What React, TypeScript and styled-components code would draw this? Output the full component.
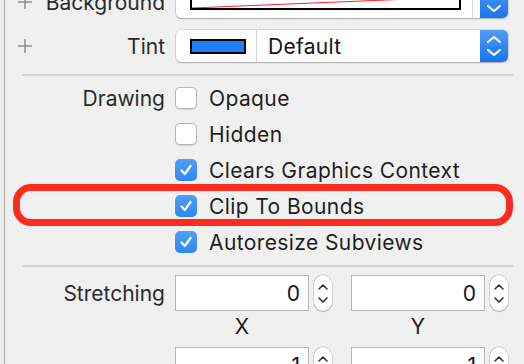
import React from 'react';
import styled, { createGlobalStyle } from 'styled-components';

const GlobalStyle = createGlobalStyle`
  html, body {
    margin: 0;
    padding: 0;
    background: #ececec;
  }
  body {
    width: 524px;
    height: 364px;
    overflow: hidden;
    font-family: Inter, "Noto Sans", sans-serif;
    -webkit-font-smoothing: antialiased;
  }
`;

const Panel = styled.div`
  margin-left: 4px;
  height: 364px;
  border-left: 1px solid #a9a9a9;
  background: #f0f0f0;
  display: flex;
  flex-direction: column;
  overflow: hidden;
`;

const TopGroup = styled.div`
  margin-top: -14px;
  display: flex;
  flex-direction: column;
  gap: 12px;
`;

const Row = styled.div<{ $h: number }>`
  position: relative;
  display: grid;
  grid-template-columns: 160px 333px;
  column-gap: 10px;
  align-items: center;
  height: ${p => p.$h}px;
  flex-shrink: 0;
`;

const LabelCell = styled.div`
  display: flex;
  align-items: center;
  justify-content: flex-end;
  padding-left: 13px;
  font-size: 21px;
  color: #2b2b2b;
  white-space: nowrap;
`;

const PlusIcon = styled.svg`
  margin-right: auto;
  flex-shrink: 0;
`;

const Separator = styled.div<{ $top: number }>`
  flex-shrink: 0;
  height: 2px;
  margin: ${p => p.$top}px 11px 0 17px;
  background: #d3d3d3;
`;

const Popup = styled.div`
  display: flex;
  align-items: stretch;
  height: 32px;
  margin-left: 1px;
  background: #fff;
  border-radius: 5px;
  box-shadow: 0 0 0 0.5px rgba(0, 0, 0, 0.18), 0 1px 1.5px rgba(0, 0, 0, 0.22);
  overflow: hidden;
`;

const WellCell = styled.div<{ $w: number }>`
  width: ${p => p.$w}px;
  flex-shrink: 0;
  display: flex;
  align-items: center;
  padding-left: 14px;
  box-sizing: border-box;
  border-right: 1px solid #d4d4d4;
`;

const Swatch = styled.div<{ $color: string; $w: number }>`
  position: relative;
  width: ${p => p.$w}px;
  height: 15px;
  box-sizing: border-box;
  border: 2px solid #000;
  background: ${p => p.$color};
  overflow: hidden;
`;

const ClearLine = styled.svg`
  display: block;
  width: 100%;
  height: 100%;
`;

const PopupText = styled.span`
  flex: 1;
  display: flex;
  align-items: center;
  padding-left: 11px;
  font-size: 21px;
  letter-spacing: 0.3px;
  color: #141414;
`;

const BlueButton = styled.div`
  width: 28px;
  margin-left: auto;
  flex-shrink: 0;
  display: flex;
  flex-direction: column;
  align-items: center;
  justify-content: center;
  gap: 6px;
  background: linear-gradient(#4e9bf8, #1b74ee);
  border-radius: 0 5px 5px 0;
`;

const Checks = styled.div`
  display: flex;
  flex-direction: column;
  margin-top: 4px;
`;

const CheckLine = styled.label`
  display: flex;
  align-items: center;
  gap: 12px;
  font-size: 21px;
  letter-spacing: 0.4px;
  color: #1e1e1e;
  white-space: nowrap;
`;

const Box = styled.span<{ $on: boolean }>`
  width: 22px;
  height: 22px;
  flex-shrink: 0;
  box-sizing: border-box;
  border-radius: 5px;
  display: flex;
  align-items: center;
  justify-content: center;
  background: ${p => (p.$on ? 'linear-gradient(#50a0fa, #2f86f3)' : '#fff')};
  border: ${p => (p.$on ? '0' : '1px solid #b6b6b6')};
  box-shadow: ${p => (p.$on ? 'none' : '0 0.5px 1px rgba(0,0,0,0.12)')};
`;

const Highlight = styled.div`
  position: absolute;
  left: 8px;
  right: 11px;
  top: -4px;
  bottom: -2px;
  border: 7px solid #ff2b1e;
  border-radius: 18px;
  pointer-events: none;
`;

const Stretch = styled.div`
  display: flex;
  flex-direction: column;
  margin-top: 8px;
`;

const Pair = styled.div`
  display: grid;
  grid-template-columns: 157px 157px;
  column-gap: 19px;
  align-items: center;
`;

const FieldGroup = styled.div`
  display: flex;
  align-items: center;
  gap: 5px;
`;

const Field = styled.div`
  width: 134px;
  height: 36px;
  box-sizing: border-box;
  background: #fff;
  border: 1px solid #b7b7b7;
  display: flex;
  align-items: center;
  justify-content: flex-end;
  padding-right: 8px;
  font-size: 21px;
  color: #141414;
`;

const Stepper = styled.div`
  width: 18px;
  height: 36px;
  box-sizing: border-box;
  background: #fff;
  border-radius: 9px;
  box-shadow: 0 0 0 0.5px rgba(0, 0, 0, 0.25), 0 1px 1px rgba(0, 0, 0, 0.18);
  display: flex;
  flex-direction: column;
  align-items: center;
  justify-content: center;
  gap: 7px;
`;

const Caption = styled.div`
  width: 134px;
  text-align: center;
  font-size: 21px;
  color: #222;
  padding-top: 3px;
`;

const SecondPair = styled.div`
  margin-top: 12px;
`;

const Plus = () => (
  <PlusIcon width="14" height="14" viewBox="0 0 14 14">
    <path d="M7 0v14M0 7h14" stroke="#8c8c8c" strokeWidth="1.5" />
  </PlusIcon>
);

const Chevron = ({ up, color, w, h, sw }: { up: boolean; color: string; w: number; h: number; sw: number }) => (
  <svg width={w} height={h} viewBox={`0 0 ${w} ${h}`}>
    <path
      d={up ? `M1 ${h - 1}L${w / 2} 1L${w - 1} ${h - 1}` : `M1 1L${w / 2} ${h - 1}L${w - 1} 1`}
      fill="none"
      stroke={color}
      strokeWidth={sw}
      strokeLinecap="round"
      strokeLinejoin="round"
    />
  </svg>
);

const Check = () => (
  <svg width="16" height="16" viewBox="0 0 16 16">
    <path d="M3.5 8.5L6.8 12L12.5 4" fill="none" stroke="#fff" strokeWidth="2.2" strokeLinecap="round" strokeLinejoin="round" />
  </svg>
);

const PopupArrows = () => (
  <BlueButton>
    <Chevron up color="#fff" w={14} h={7} sw={2} />
    <Chevron up={false} color="#fff" w={14} h={7} sw={2} />
  </BlueButton>
);

const drawingOptions = [
  { label: 'Opaque', on: false },
  { label: 'Hidden', on: false },
  { label: 'Clears Graphics Context', on: true },
  { label: 'Clip To Bounds', on: true, marked: true },
  { label: 'Autoresize Subviews', on: true },
];

const NumberField = ({ value }: { value: string }) => (
  <FieldGroup>
    <Field>{value}</Field>
    <Stepper>
      <Chevron up color="#333" w={10} h={6} sw={1.6} />
      <Chevron up={false} color="#333" w={10} h={6} sw={1.6} />
    </Stepper>
  </FieldGroup>
);

const App: React.FC = () => (
  <>
    <GlobalStyle />
    <Panel>
      <TopGroup>
        <Row $h={32}>
          <LabelCell>
            <Plus />
            Background
          </LabelCell>
          <Popup>
            <WellCell $w={297}>
              <Swatch $color="#fff" $w={271}>
                <ClearLine viewBox="0 0 100 10" preserveAspectRatio="none">
                  <line x1="0" y1="10" x2="100" y2="0" stroke="#ff2020" strokeWidth="1" vectorEffect="non-scaling-stroke" />
                </ClearLine>
              </Swatch>
            </WellCell>
            <PopupArrows />
          </Popup>
        </Row>
        <Row $h={32}>
          <LabelCell>
            <Plus />
            Tint
          </LabelCell>
          <Popup>
            <WellCell $w={81}>
              <Swatch $color="#1a7ef6" $w={56} />
            </WellCell>
            <PopupText>Default</PopupText>
            <PopupArrows />
          </Popup>
        </Row>
      </TopGroup>

      <Separator $top={12} />

      <Checks>
        {drawingOptions.map((opt, i) => (
          <Row $h={36} key={opt.label}>
            <LabelCell>{i === 0 ? 'Drawing' : ''}</LabelCell>
            <CheckLine>
              <Box $on={opt.on}>{opt.on && <Check />}</Box>
              {opt.label}
            </CheckLine>
            {opt.marked && <Highlight />}
          </Row>
        ))}
      </Checks>

      <Separator $top={5} />

      <Stretch>
        <Row $h={36}>
          <LabelCell>Stretching</LabelCell>
          <Pair>
            <NumberField value="0" />
            <NumberField value="0" />
          </Pair>
        </Row>
        <Row $h={24}>
          <LabelCell />
          <Pair>
            <Caption>X</Caption>
            <Caption>Y</Caption>
          </Pair>
        </Row>
        <SecondPair>
          <Row $h={36}>
            <LabelCell />
            <Pair>
              <NumberField value="1" />
              <NumberField value="1" />
            </Pair>
          </Row>
        </SecondPair>
      </Stretch>
    </Panel>
  </>
);

export default App;
